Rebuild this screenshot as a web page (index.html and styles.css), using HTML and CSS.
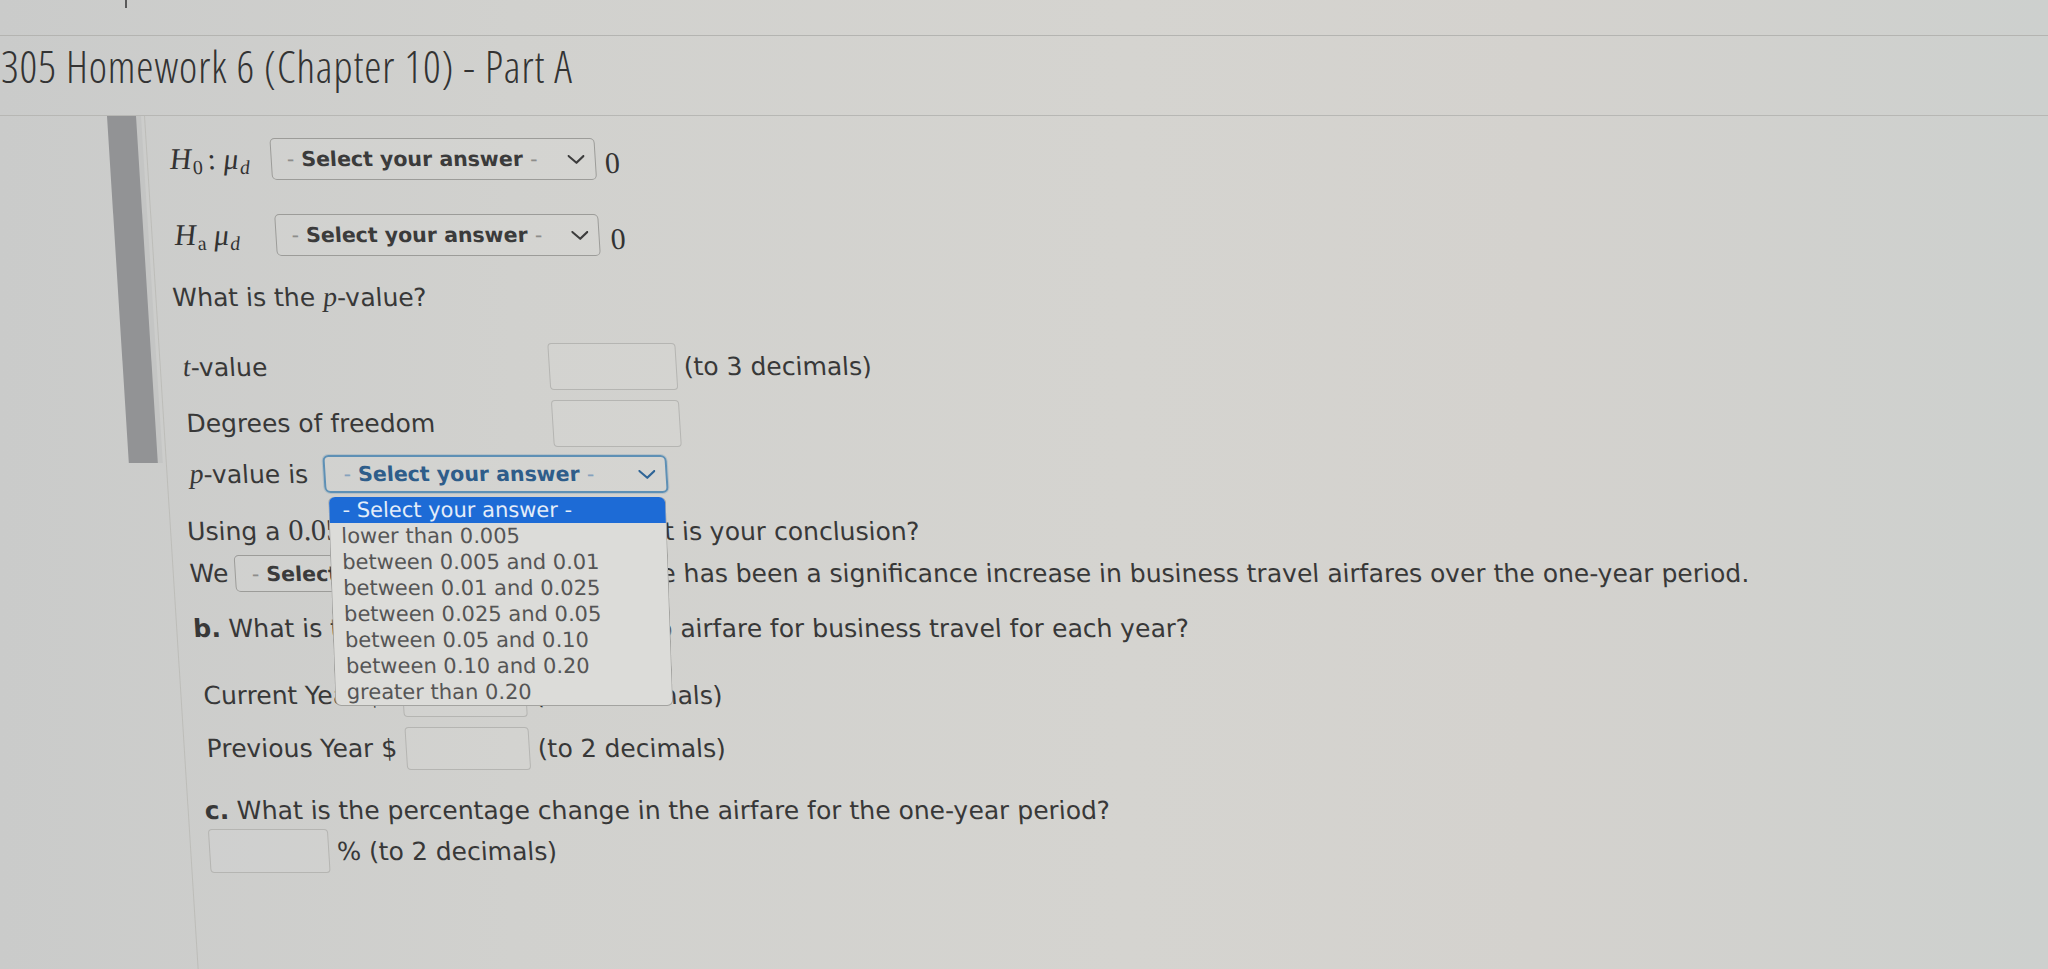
FILE: index.html
```html
<!DOCTYPE html>
<html lang="en">
<head>
<meta charset="utf-8">
<title>305 Homework 6 (Chapter 10) - Part A</title>
<link rel="stylesheet" href="styles.css">
</head>
<body>
<div class="topbar"><span class="tick"></span></div>
<header class="titlebar"><h1 class="title">305 Homework 6 (Chapter 10) - Part A</h1></header>
<main class="stage">
  <aside class="rail"><div class="rail-bar"></div></aside>
  <section class="panel">
    <div class="row row-h0 indent">
      <span class="math-label"><i class="mi">H</i><sub class="sub">0</sub><span class="mo">:</span>&nbsp;<i class="mi">μ</i><sub class="sub mi">d</sub></span>
      <span class="select sel-h0"><span class="sel-text"><span class="dash">-</span> Select your answer <span class="dash">-</span></span><svg class="chev" viewBox="0 0 17 9"><polyline points="1,1 8.5,7.8 16,1"/></svg></span>
      <span class="mn">0</span>
    </div>
    <div class="row row-ha indent">
      <span class="math-label"><i class="mi">H</i><sub class="sub">a</sub>&nbsp;<i class="mi">μ</i><sub class="sub mi">d</sub></span>
      <span class="select sel-ha"><span class="sel-text"><span class="dash">-</span> Select your answer <span class="dash">-</span></span><svg class="chev" viewBox="0 0 17 9"><polyline points="1,1 8.5,7.8 16,1"/></svg></span>
      <span class="mn mn-ha">0</span>
    </div>
    <p class="line row-what">What is the <i class="mvar">p</i>-value?</p>
    <div class="row row-tval indent">
      <span class="label lab-wide"><i class="mvar">t</i>-value</span>
      <span class="input inp-tall"></span>
      <span class="note">(to 3 decimals)</span>
    </div>
    <div class="row row-df indent">
      <span class="label lab-wide">Degrees of freedom</span>
      <span class="input inp-tall"></span>
    </div>
    <div class="row row-pv indent">
      <span class="label lab-pv"><i class="mvar">p</i>-value is</span>
      <span class="select-wrap">
        <span class="select sel-focus"><span class="sel-text"><span class="dash">-</span> Select your answer <span class="dash">-</span></span><svg class="chev" viewBox="0 0 17 9"><polyline points="1,1 8.5,7.8 16,1"/></svg></span>
        <span class="dropdown">
          <span class="opt opt-active">- Select your answer -</span>
          <span class="opt">lower than 0.005</span>
          <span class="opt">between 0.005 and 0.01</span>
          <span class="opt">between 0.01 and 0.025</span>
          <span class="opt">between 0.025 and 0.05</span>
          <span class="opt">between 0.05 and 0.10</span>
          <span class="opt">between 0.10 and 0.20</span>
          <span class="opt">greater than 0.20</span>
        </span>
      </span>
    </div>
    <p class="line row-using">Using a <span class="mnum">0.05</span> level of significance, what is your conclusion?</p>
    <div class="row row-we">
      <span class="label lab-we">We</span>
      <span class="select sel-we"><span class="sel-text"><span class="dash">-</span> Select your answer <span class="dash">-</span></span><svg class="chev" viewBox="0 0 17 9"><polyline points="1,1 8.5,7.8 16,1"/></svg></span>
      <span class="after">that there has been a significance increase in business travel airfares over the one-year period.</span>
    </div>
    <p class="line row-b"><b class="part">b.</b> What is the sample mean roundtrip airfare for business travel for each year?</p>
    <div class="row row-cur indent">
      <span class="label lab-year">Current Year $</span>
      <span class="input inp-year"></span>
      <span class="note note-year">(to 2 decimals)</span>
    </div>
    <div class="row row-prev indent">
      <span class="label lab-year">Previous Year $</span>
      <span class="input inp-year"></span>
      <span class="note note-year">(to 2 decimals)</span>
    </div>
    <p class="line row-c"><b class="part">c.</b> What is the percentage change in the airfare for the one-year period?</p>
    <div class="row row-pct">
      <span class="input inp-pct"></span>
      <span class="note note-pct">% (to 2 decimals)</span>
    </div>
  </section>
</main>
</body>
</html>
```

FILE: styles.css
```css
html, body {
  margin: 0;
  padding: 0;
}

body {
  width: 2048px;
  height: 969px;
  overflow: hidden;
  background: linear-gradient(90deg, #cacbca 0%, #d1d1ce 25%, #d5d4d0 55%, #d4d2ce 75%, #cdd0ce 100%);
  font-family: "DejaVu Sans", Verdana, sans-serif;
  font-size: 25px;
  color: #383838;
}

.topbar {
  height: 35px;
  border-bottom: 1px solid #b4b4b1;
}

.tick {
  display: block;
  margin-left: 125px;
  width: 2px;
  height: 8px;
  background: #5a5a5a;
}

.titlebar {
  height: 79px;
  border-bottom: 1px solid #b7b7b4;
  overflow: hidden;
}

.title {
  margin: 0;
  padding: 7px 0 0 1px;
  font-family: "Open Sans", "Noto Sans", sans-serif;
  font-weight: 300;
  font-size: 43.5px;
  font-stretch: 75%;
  letter-spacing: 0.9px;
  line-height: 48px;
  color: #333;
  white-space: nowrap;
}

.stage {
  display: flex;
  height: 853px;
  transform: skewX(3.6deg);
  transform-origin: 0 0;
}

.rail {
  width: 144px;
  flex-shrink: 0;
}

.rail-bar {
  margin-left: 107px;
  width: 29px;
  height: 347px;
  background: #929395;
  box-shadow: 5px 0 0 #c4c5c4;
}

.panel {
  flex: 1;
  border-left: 1px solid #bdbdb9;
  padding-left: 16px;
  display: flex;
  flex-direction: column;
  align-items: flex-start;
}

.row {
  display: flex;
  align-items: center;
  white-space: nowrap;
}

.line {
  margin-bottom: 0;
  line-height: 30px;
  white-space: nowrap;
}

.indent { margin-left: 6px; }

.row-h0 { margin-top: 22px; height: 42px; }
.row-ha { margin-top: 34px; height: 42px; }
.row-what { margin-top: 26px; height: 30px; }
.row-tval { margin-top: 31px; height: 47px; }
.row-df { margin-top: 10px; height: 47px; }
.row-pv { margin-top: 8px; height: 38px; }
.row-using { margin-top: 22px; height: 30px; }
.row-we { margin-top: 10px; height: 37px; }
.row-b { margin-top: 22px; height: 30px; }
.row-cur { margin-top: 30px; height: 43px; }
.row-prev { margin-top: 10px; height: 43px; }
.row-c { margin-top: 26px; height: 30px; }
.row-pct { margin-top: 3px; height: 44px; margin-left: 2px; }

/* math */
.math-label {
  width: 101px;
  flex-shrink: 0;
  font-family: "Liberation Serif", "DejaVu Serif", serif;
  font-size: 30px;
  color: #333;
}

.mi { font-style: italic; }

.sub {
  font-size: 20px;
  line-height: 0;
  vertical-align: -5px;
  margin-left: 1px;
}

.mo { margin-left: 5px; }

.mn {
  margin-left: 9px;
  font-family: "Liberation Serif", "DejaVu Serif", serif;
  font-size: 30px;
  color: #333;
  position: relative;
  top: 4px;
}

.mn-ha { margin-left: 11px; }

.mvar {
  font-family: "Liberation Serif", "DejaVu Serif", serif;
  font-style: italic;
  font-size: 28px;
}

.mnum {
  font-family: "Liberation Serif", "DejaVu Serif", serif;
  font-size: 30px;
}

.part { font-weight: bold; }

.label { flex-shrink: 0; }
.lab-wide { width: 366px; }
.lab-pv { width: 134px; }
.lab-we { width: 45px; }
.lab-year { width: 199px; }

/* selects */
.select {
  display: inline-flex;
  align-items: center;
  justify-content: space-between;
  box-sizing: border-box;
  flex-shrink: 0;
  padding: 0 10px 0 15px;
  border: 1px solid #9c9c99;
  border-radius: 5px;
  background: rgba(255, 255, 255, 0.07);
  color: #3b3b3b;
}

.sel-h0 { width: 325px; height: 42px; }
.sel-ha { width: 324px; height: 42px; }
.sel-we { width: 304px; height: 37px; padding-left: 16px; }

.sel-text {
  font-family: "DejaVu Sans", Verdana, sans-serif;
  font-weight: bold;
  font-size: 20.5px;
}

.dash {
  font-weight: normal;
  color: #8d8d8b;
}

.chev {
  width: 17px;
  height: 9px;
  fill: none;
  stroke: #3d3d3d;
  stroke-width: 2.2;
  stroke-linecap: round;
  stroke-linejoin: round;
}

.select-wrap {
  position: relative;
  display: inline-block;
}

.sel-focus {
  width: 344px;
  height: 38px;
  padding-left: 18px;
  border: 2px solid #5e90b5;
  border-radius: 6px;
  color: #2e5d8a;
  box-shadow: 0 0 0 1px rgba(94, 144, 181, 0.25);
}

.sel-focus .dash { color: #86a2bd; }
.sel-focus .chev { stroke: #2f6597; }

.dropdown {
  position: absolute;
  top: calc(100% + 4px);
  left: 3px;
  z-index: 5;
  display: flex;
  flex-direction: column;
  box-sizing: border-box;
  width: 338px;
  background: #dcdcd9;
  border: 1px solid #a3a3a0;
  border-top: none;
  border-radius: 6px;
  font-family: "DejaVu Sans", Verdana, sans-serif;
  font-size: 21px;
  line-height: 26px;
  color: #555;
  transform: skewX(-1.6deg);
  transform-origin: 0 0;
}

.opt {
  display: block;
  padding-left: 11px;
  height: 26px;
}

.opt-active {
  padding-left: 13px;
  background: #1d6bd6;
  color: #e4edf9;
  border-radius: 6px 6px 0 0;
}

/* inputs */
.input {
  display: inline-block;
  box-sizing: border-box;
  flex-shrink: 0;
  border: 1.5px solid #b5b5b2;
  border-radius: 4px;
  background: rgba(255, 255, 255, 0.06);
}

.inp-tall { width: 128px; height: 47px; }
.inp-year { width: 124px; height: 43px; }
.inp-pct { width: 120px; height: 44px; }

.note { margin-left: 7px; }
.note-year { margin-left: 8px; }
.note-pct { margin-left: 8px; }

.after { margin-left: 12px; }
```
